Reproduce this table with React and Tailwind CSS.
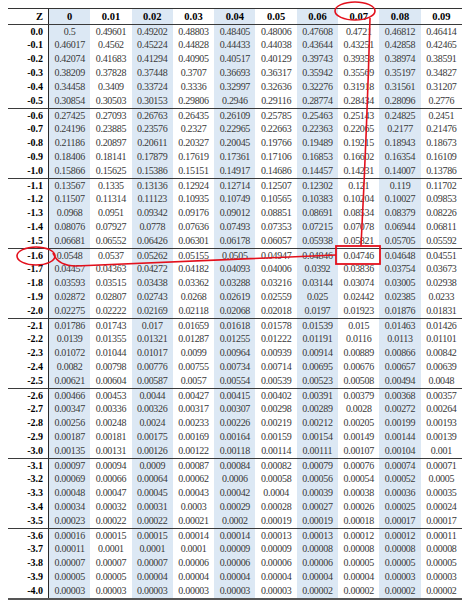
const cols = ['0', '0.01', '0.02', '0.03', '0.04', '0.05', '0.06', '0.07', '0.08', '0.09']

const groups = [
  [
    ['0.0', '0.5 0.49601 0.49202 0.48803 0.48405 0.48006 0.47608 0.4721 0.46812 0.46414'],
    ['-0.1', '0.46017 0.4562 0.45224 0.44828 0.44433 0.44038 0.43644 0.43251 0.42858 0.42465'],
    ['-0.2', '0.42074 0.41683 0.41294 0.40905 0.40517 0.40129 0.39743 0.39358 0.38974 0.38591'],
    ['-0.3', '0.38209 0.37828 0.37448 0.3707 0.36693 0.36317 0.35942 0.35569 0.35197 0.34827'],
    ['-0.4', '0.34458 0.3409 0.33724 0.3336 0.32997 0.32636 0.32276 0.31918 0.31561 0.31207'],
    ['-0.5', '0.30854 0.30503 0.30153 0.29806 0.2946 0.29116 0.28774 0.28434 0.28096 0.2776'],
  ],
  [
    ['-0.6', '0.27425 0.27093 0.26763 0.26435 0.26109 0.25785 0.25463 0.25143 0.24825 0.2451'],
    ['-0.7', '0.24196 0.23885 0.23576 0.2327 0.22965 0.22663 0.22363 0.22065 0.2177 0.21476'],
    ['-0.8', '0.21186 0.20897 0.20611 0.20327 0.20045 0.19766 0.19489 0.19215 0.18943 0.18673'],
    ['-0.9', '0.18406 0.18141 0.17879 0.17619 0.17361 0.17106 0.16853 0.16602 0.16354 0.16109'],
    ['-1.0', '0.15866 0.15625 0.15386 0.15151 0.14917 0.14686 0.14457 0.14231 0.14007 0.13786'],
  ],
  [
    ['-1.1', '0.13567 0.1335 0.13136 0.12924 0.12714 0.12507 0.12302 0.121 0.119 0.11702'],
    ['-1.2', '0.11507 0.11314 0.11123 0.10935 0.10749 0.10565 0.10383 0.10204 0.10027 0.09853'],
    ['-1.3', '0.0968 0.0951 0.09342 0.09176 0.09012 0.08851 0.08691 0.08534 0.08379 0.08226'],
    ['-1.4', '0.08076 0.07927 0.0778 0.07636 0.07493 0.07353 0.07215 0.07078 0.06944 0.06811'],
    ['-1.5', '0.06681 0.06552 0.06426 0.06301 0.06178 0.06057 0.05938 0.05821 0.05705 0.05592'],
  ],
  [
    ['-1.6', '0.0548 0.0537 0.05262 0.05155 0.0505 0.04947 0.04846 0.04746 0.04648 0.04551'],
    ['-1.7', '0.04457 0.04363 0.04272 0.04182 0.04093 0.04006 0.0392 0.03836 0.03754 0.03673'],
    ['-1.8', '0.03593 0.03515 0.03438 0.03362 0.03288 0.03216 0.03144 0.03074 0.03005 0.02938'],
    ['-1.9', '0.02872 0.02807 0.02743 0.0268 0.02619 0.02559 0.025 0.02442 0.02385 0.0233'],
    ['-2.0', '0.02275 0.02222 0.02169 0.02118 0.02068 0.02018 0.0197 0.01923 0.01876 0.01831'],
  ],
  [
    ['-2.1', '0.01786 0.01743 0.017 0.01659 0.01618 0.01578 0.01539 0.015 0.01463 0.01426'],
    ['-2.2', '0.0139 0.01355 0.01321 0.01287 0.01255 0.01222 0.01191 0.0116 0.0113 0.01101'],
    ['-2.3', '0.01072 0.01044 0.01017 0.0099 0.00964 0.00939 0.00914 0.00889 0.00866 0.00842'],
    ['-2.4', '0.0082 0.00798 0.00776 0.00755 0.00734 0.00714 0.00695 0.00676 0.00657 0.00639'],
    ['-2.5', '0.00621 0.00604 0.00587 0.0057 0.00554 0.00539 0.00523 0.00508 0.00494 0.0048'],
  ],
  [
    ['-2.6', '0.00466 0.00453 0.0044 0.00427 0.00415 0.00402 0.00391 0.00379 0.00368 0.00357'],
    ['-2.7', '0.00347 0.00336 0.00326 0.00317 0.00307 0.00298 0.00289 0.0028 0.00272 0.00264'],
    ['-2.8', '0.00256 0.00248 0.0024 0.00233 0.00226 0.00219 0.00212 0.00205 0.00199 0.00193'],
    ['-2.9', '0.00187 0.00181 0.00175 0.00169 0.00164 0.00159 0.00154 0.00149 0.00144 0.00139'],
    ['-3.0', '0.00135 0.00131 0.00126 0.00122 0.00118 0.00114 0.00111 0.00107 0.00104 0.001'],
  ],
  [
    ['-3.1', '0.00097 0.00094 0.0009 0.00087 0.00084 0.00082 0.00079 0.00076 0.00074 0.00071'],
    ['-3.2', '0.00069 0.00066 0.00064 0.00062 0.0006 0.00058 0.00056 0.00054 0.00052 0.0005'],
    ['-3.3', '0.00048 0.00047 0.00045 0.00043 0.00042 0.0004 0.00039 0.00038 0.00036 0.00035'],
    ['-3.4', '0.00034 0.00032 0.00031 0.0003 0.00029 0.00028 0.00027 0.00026 0.00025 0.00024'],
    ['-3.5', '0.00023 0.00022 0.00022 0.00021 0.0002 0.00019 0.00019 0.00018 0.00017 0.00017'],
  ],
  [
    ['-3.6', '0.00016 0.00015 0.00015 0.00014 0.00014 0.00013 0.00013 0.00012 0.00012 0.00011'],
    ['-3.7', '0.00011 0.0001 0.0001 0.0001 0.00009 0.00009 0.00008 0.00008 0.00008 0.00008'],
    ['-3.8', '0.00007 0.00007 0.00007 0.00006 0.00006 0.00006 0.00006 0.00005 0.00005 0.00005'],
    ['-3.9', '0.00005 0.00005 0.00004 0.00004 0.00004 0.00004 0.00004 0.00004 0.00003 0.00003'],
    ['-4.0', '0.00003 0.00003 0.00003 0.00003 0.00003 0.00003 0.00002 0.00002 0.00002 0.00002'],
  ],
]

function Row({ z, values, first }) {
  return (
    <div className={`grid grid-cols-[41px_repeat(10,minmax(0,1fr))] h-[14px] ${first ? 'border-t border-[#3a3a3a]' : ''}`}>
      <div className="border-r border-[#2a2a2a] text-right pr-[5px] font-bold text-black leading-[14px]">{z}</div>
      {values.split(' ').map((v, i) => (
        <div key={i} className={`text-center leading-[14px] text-[#383838] tracking-[-0.3px] ${i % 2 === 0 ? 'bg-[#dce8f4]' : ''}`}>
          {v}
        </div>
      ))}
    </div>
  )
}

export default function App() {
  return (
    <div className="relative w-[474px] h-[607px] bg-white pt-[8px] pl-[8px]" style={{ fontFamily: '"Liberation Serif", "Times New Roman", serif' }}>
      <div className="w-[454px] text-[10px] border-t-[1.5px] border-b-2 border-t-[#333] border-b-[#555]">
        {/* header */}
        <div className="grid grid-cols-[41px_repeat(10,minmax(0,1fr))] h-[15px] font-bold text-black text-[10.5px]">
          <div className="border-r border-[#2a2a2a] text-right pr-[5px] leading-[15px]">Z</div>
          {cols.map((c, i) => (
            <div key={c} className={`text-center leading-[15px] ${i % 2 === 0 ? 'bg-[#dce8f4]' : ''}`}>{c}</div>
          ))}
        </div>
        {groups.map((g, gi) => (
          <div key={gi}>
            {g.map(([z, v], ri) => (
              <Row key={z} z={z} values={v} first={ri === 0} />
            ))}
          </div>
        ))}
      </div>

      {/* red annotations */}
      <svg className="absolute inset-0 pointer-events-none" width="474" height="607" viewBox="0 0 474 607" fill="none">
        <ellipse cx="355" cy="11" rx="20" ry="9" stroke="#e3101c" strokeWidth="1.6" />
        <path d="M370 18 Q 367 130 361 246" stroke="#e3101c" strokeWidth="1.6" />
        <rect x="336" y="246" width="44" height="18" stroke="#e3101c" strokeWidth="1.8" />
        <ellipse cx="36" cy="256" rx="19" ry="9" stroke="#e3101c" strokeWidth="1.6" />
        <path d="M53 253 Q 58 266 76 266 L 336 255" stroke="#e3101c" strokeWidth="1.6" />
      </svg>
    </div>
  )
}
